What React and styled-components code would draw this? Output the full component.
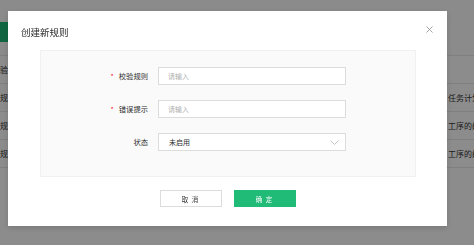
import React from "react";
import styled, { createGlobalStyle } from "styled-components";

const GlobalStyle = createGlobalStyle`
  html, body {
    margin: 0;
    padding: 0;
    background: #fff;
    font-family: "Noto Sans CJK SC", "Noto Sans", sans-serif;
  }
`;

const rows = [
  { left: "规二测试", right: "任务计划名称" },
  { left: "规二测试", right: "工序的编号" },
  { left: "规二测试", right: "工序的编号" },
];

export default function App() {
  return (
    <>
      <GlobalStyle />
      <Page>
        <PageHeader>
          <AddButton />
        </PageHeader>
        <Table>
          <HeadRow>
            <LeftCell>验规则</LeftCell>
            <RightCell />
          </HeadRow>
          {rows.map((row, i) => (
            <BodyRow key={i}>
              <LeftCell>{row.left}</LeftCell>
              <RightCell>{row.right}</RightCell>
            </BodyRow>
          ))}
        </Table>
      </Page>

      <Mask>
        <Modal>
          <ModalHeader>
            <Title>创建新规则</Title>
            <CloseButton>
              <svg width="7" height="7" viewBox="0 0 7 7">
                <path d="M0.5 0.5 L6.5 6.5 M6.5 0.5 L0.5 6.5" stroke="#999" strokeWidth="0.9" fill="none" />
              </svg>
            </CloseButton>
          </ModalHeader>

          <FormPanel>
            <FormGrid>
              <Label required>校验规则</Label>
              <Input placeholder="请输入" />
              <Label required>错误提示</Label>
              <Input placeholder="请输入" />
              <Label>状态</Label>
              <Select>
                <span>未启用</span>
                <svg width="9" height="5" viewBox="0 0 9 5">
                  <path d="M0.5 0.5 L4.5 4.5 L8.5 0.5" stroke="#c0c0c0" strokeWidth="0.9" fill="none" />
                </svg>
              </Select>
            </FormGrid>
          </FormPanel>

          <Footer>
            <FooterButton>取 消</FooterButton>
            <FooterButton primary>确 定</FooterButton>
          </Footer>
        </Modal>
      </Mask>
    </>
  );
}

const Page = styled.div`
  width: 474px;
  height: 245px;
  display: flex;
  flex-direction: column;
  overflow: hidden;
`;

const PageHeader = styled.div`
  height: 55px;
  background: #fdfdfd;
  display: flex;
  align-items: flex-start;
  padding-top: 22px;
  box-sizing: border-box;
`;

const AddButton = styled.div`
  width: 9px;
  height: 20px;
  background: #1fbb77;
`;

const Table = styled.div`
  display: flex;
  flex-direction: column;
  border-top: 1px solid #e8e8e8;
`;

const HeadRow = styled.div`
  display: grid;
  grid-template-columns: 448px 1fr;
  height: 27px;
  align-items: center;
  border-bottom: 1px solid #e8e8e8;
  font-size: 8px;
  color: #222;
`;

const BodyRow = styled(HeadRow)`
  color: #333;
`;

const LeftCell = styled.div`
  white-space: nowrap;
  overflow: hidden;
`;

const RightCell = styled.div`
  white-space: nowrap;
  overflow: hidden;
`;

const Mask = styled.div`
  position: fixed;
  inset: 0;
  background: rgba(0, 0, 0, 0.45);
  padding: 11px 0 0 8px;
  box-sizing: border-box;
`;

const Modal = styled.div`
  width: 439px;
  height: 215px;
  background: #fff;
  box-shadow: 0 2px 6px rgba(0, 0, 0, 0.15);
  display: flex;
  flex-direction: column;
`;

const ModalHeader = styled.div`
  height: 39px;
  display: flex;
  align-items: center;
  justify-content: space-between;
  padding: 0 13px;
  box-sizing: border-box;
`;

const Title = styled.div`
  font-size: 9.5px;
  color: #2b2b2b;
  margin-top: 2px;
`;

const CloseButton = styled.div`
  width: 7px;
  height: 7px;
  display: flex;
  margin-right: 1px;
  margin-top: -3px;
`;

const FormPanel = styled.div`
  margin: 0 31px 0 32px;
  height: 127px;
  background: #fafafa;
  border: 1px solid #f0f0f0;
  box-sizing: border-box;
  padding-top: 16px;
`;

const FormGrid = styled.div`
  display: grid;
  grid-template-columns: 107px 188px;
  column-gap: 10px;
  row-gap: 15px;
  align-items: center;
`;

const Label = styled.div`
  font-size: 7.3px;
  color: #2b2b2b;
  text-align: right;
  white-space: nowrap;

  &::before {
    content: ${(p) => (p.required ? '"*"' : '""')};
    color: #f5222d;
    margin-right: 5px;
    font-size: 7px;
  }
`;

const Input = styled.input`
  box-sizing: border-box;
  width: 188px;
  height: 18px;
  border: 1px solid #dcdcdc;
  background: #fff;
  padding: 0 9px;
  font-size: 7px;
  font-family: inherit;
  color: #333;
  outline: none;

  &::placeholder {
    color: #b0b0b0;
  }
`;

const Select = styled.div`
  box-sizing: border-box;
  width: 188px;
  height: 18px;
  border: 1px solid #dcdcdc;
  background: #fff;
  padding: 0 6px 0 10px;
  display: flex;
  align-items: center;
  justify-content: space-between;
  font-size: 7px;
  color: #2b2b2b;
`;

const Footer = styled.div`
  display: flex;
  justify-content: center;
  gap: 12px;
  padding-top: 13px;
`;

const FooterButton = styled.div`
  width: 62px;
  height: 17px;
  box-sizing: border-box;
  display: flex;
  align-items: center;
  justify-content: center;
  font-size: 6.5px;
  letter-spacing: 1px;
  background: ${(p) => (p.primary ? "#1fbb77" : "#fff")};
  color: ${(p) => (p.primary ? "#fff" : "#333")};
  border: 1px solid ${(p) => (p.primary ? "#1fbb77" : "#dcdcdc")};
`;
